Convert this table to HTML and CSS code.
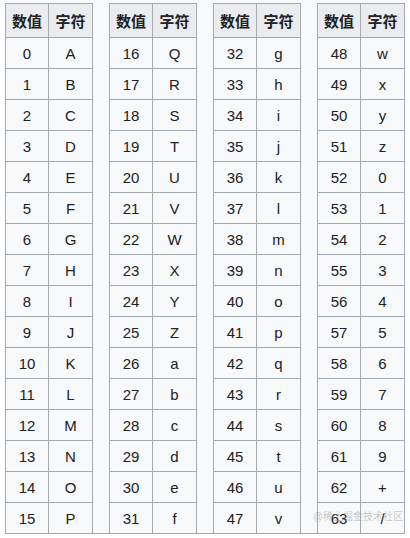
FILE: index.html
```html
<!DOCTYPE html>
<html lang="zh">
<head>
<meta charset="utf-8">
<link rel="stylesheet" href="styles.css">
</head>
<body>
<div class="wrap">
  <table class="b64">
    <thead><tr><th>数值</th><th>字符</th></tr></thead>
    <tbody>
      <tr><td>0</td><td>A</td></tr><tr><td>1</td><td>B</td></tr><tr><td>2</td><td>C</td></tr><tr><td>3</td><td>D</td></tr>
      <tr><td>4</td><td>E</td></tr><tr><td>5</td><td>F</td></tr><tr><td>6</td><td>G</td></tr><tr><td>7</td><td>H</td></tr>
      <tr><td>8</td><td>I</td></tr><tr><td>9</td><td>J</td></tr><tr><td>10</td><td>K</td></tr><tr><td>11</td><td>L</td></tr>
      <tr><td>12</td><td>M</td></tr><tr><td>13</td><td>N</td></tr><tr><td>14</td><td>O</td></tr><tr><td>15</td><td>P</td></tr>
    </tbody>
  </table>
  <table class="b64">
    <thead><tr><th>数值</th><th>字符</th></tr></thead>
    <tbody>
      <tr><td>16</td><td>Q</td></tr><tr><td>17</td><td>R</td></tr><tr><td>18</td><td>S</td></tr><tr><td>19</td><td>T</td></tr>
      <tr><td>20</td><td>U</td></tr><tr><td>21</td><td>V</td></tr><tr><td>22</td><td>W</td></tr><tr><td>23</td><td>X</td></tr>
      <tr><td>24</td><td>Y</td></tr><tr><td>25</td><td>Z</td></tr><tr><td>26</td><td>a</td></tr><tr><td>27</td><td>b</td></tr>
      <tr><td>28</td><td>c</td></tr><tr><td>29</td><td>d</td></tr><tr><td>30</td><td>e</td></tr><tr><td>31</td><td>f</td></tr>
    </tbody>
  </table>
  <table class="b64">
    <thead><tr><th>数值</th><th>字符</th></tr></thead>
    <tbody>
      <tr><td>32</td><td>g</td></tr><tr><td>33</td><td>h</td></tr><tr><td>34</td><td>i</td></tr><tr><td>35</td><td>j</td></tr>
      <tr><td>36</td><td>k</td></tr><tr><td>37</td><td>l</td></tr><tr><td>38</td><td>m</td></tr><tr><td>39</td><td>n</td></tr>
      <tr><td>40</td><td>o</td></tr><tr><td>41</td><td>p</td></tr><tr><td>42</td><td>q</td></tr><tr><td>43</td><td>r</td></tr>
      <tr><td>44</td><td>s</td></tr><tr><td>45</td><td>t</td></tr><tr><td>46</td><td>u</td></tr><tr><td>47</td><td>v</td></tr>
    </tbody>
  </table>
  <table class="b64">
    <thead><tr><th>数值</th><th>字符</th></tr></thead>
    <tbody>
      <tr><td>48</td><td>w</td></tr><tr><td>49</td><td>x</td></tr><tr><td>50</td><td>y</td></tr><tr><td>51</td><td>z</td></tr>
      <tr><td>52</td><td>0</td></tr><tr><td>53</td><td>1</td></tr><tr><td>54</td><td>2</td></tr><tr><td>55</td><td>3</td></tr>
      <tr><td>56</td><td>4</td></tr><tr><td>57</td><td>5</td></tr><tr><td>58</td><td>6</td></tr><tr><td>59</td><td>7</td></tr>
      <tr><td>60</td><td>8</td></tr><tr><td>61</td><td>9</td></tr><tr><td>62</td><td>+</td></tr><tr><td>63</td><td>/</td></tr>
    </tbody>
  </table>
  <div class="watermark">@稀土掘金技术社区</div>
</div>
</body>
</html>
```
FILE: styles.css
```css
html, body {
  margin: 0;
  padding: 0;
  background: #ffffff;
}
body {
  font-family: "Liberation Sans", "Noto Sans CJK SC", sans-serif;
  color: #202122;
}
.wrap {
  position: relative;
  margin-left: 5px;
  width: 400px;
  padding-top: 3px;
  display: flex;
  gap: 16px;
  background: #f8f9fa;
  border-bottom: 1px solid #a2a9b1;
}
.b64 {
  border-collapse: separate;
  border-spacing: 0;
  table-layout: fixed;
  width: 88px;
  border-left: 1px solid #a2a9b1;
  border-top: 1px solid #a2a9b1;
  background: #f8f9fa;
  font-size: 15px;
}
.b64 th, .b64 td {
  padding: 0;
  text-align: center;
  vertical-align: middle;
  border-right: 1px solid #a2a9b1;
  border-bottom: 1px solid #a2a9b1;
}
.b64 tbody tr:last-child td {
  border-bottom: none;
}
.b64 th {
  height: 33px;
  background: #eaecf0;
  font-weight: bold;
  font-size: 15px;
}
.b64 th:first-child, .b64 td:first-child {
  width: 42px;
}
.b64 td {
  height: 30px;
}
.watermark {
  position: absolute;
  right: 2px;
  bottom: 10px;
  font-size: 10px;
  color: rgba(150, 150, 150, 0.5);
  pointer-events: none;
}
```
